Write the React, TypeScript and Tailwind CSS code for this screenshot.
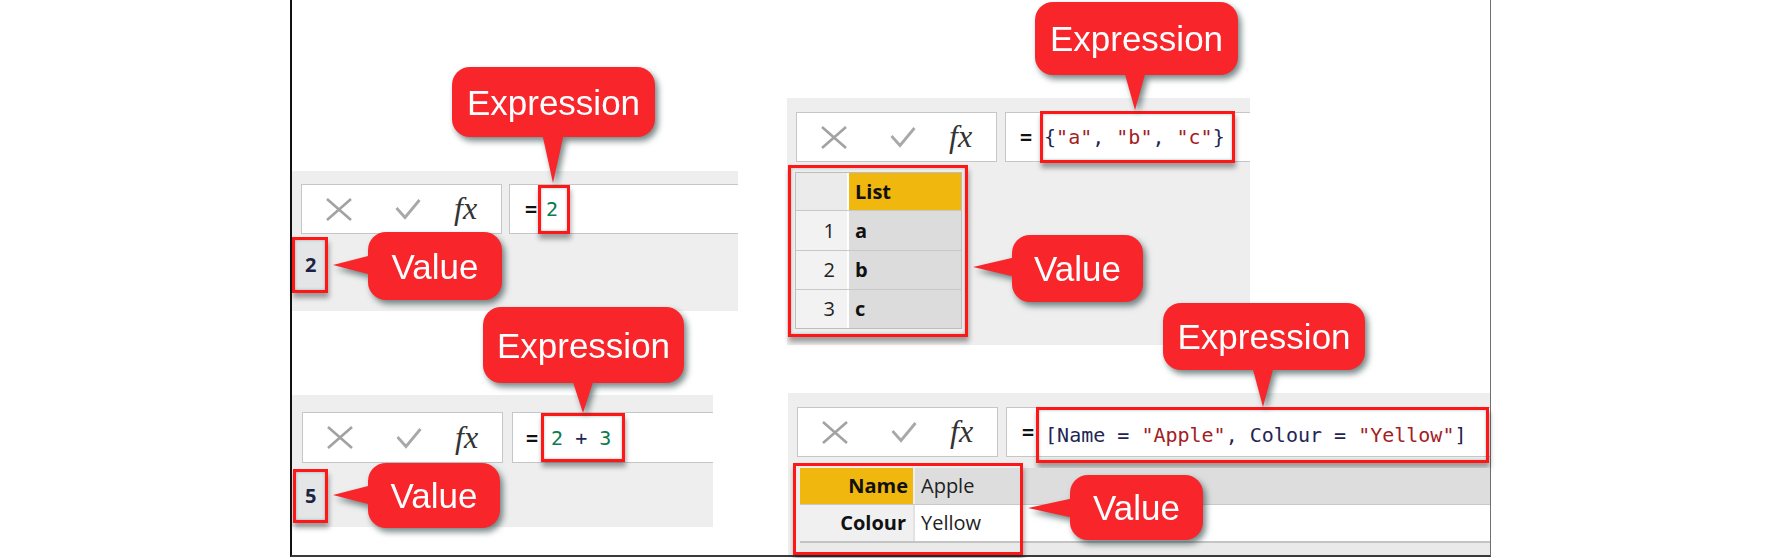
import React from "react";

const RED = "border-[#ff1717]";
const CODE = "font-['DejaVu_Sans_Mono',monospace] text-[20px] leading-none whitespace-pre";
const UI = "font-['Open_Sans',sans-serif] text-[20px] leading-none";

const Num = ({ children }: { children: React.ReactNode }) => (
  <span className="text-[#0b7a4f]">{children}</span>
);
const Str = ({ children }: { children: React.ReactNode }) => (
  <span className="text-[#a3201f]">{children}</span>
);
const Id = ({ children }: { children: React.ReactNode }) => (
  <span className="text-[#1f2654]">{children}</span>
);

// the cancel / commit / fx block of the formula bar
const FormulaButtons = ({ className = "" }: { className?: string }) => (
  <div
    className={`flex items-center shrink-0 w-[201px] bg-white border border-[#c6c6c6] pl-[23px] ${className}`}
  >
    <svg viewBox="0 0 28 25" className="w-[28px] h-[25px]">
      <path
        d="M2 2 L26 23 M26 2 L2 23"
        stroke="#a2a2a2"
        strokeWidth="2.6"
        fill="none"
      />
    </svg>
    <svg viewBox="0 0 26 24" className="ml-[42px] w-[26px] h-[24px]">
      <path
        d="M1.5 11 L10 20.5 L24.5 3"
        stroke="#a8a8a8"
        strokeWidth="2.8"
        fill="none"
      />
    </svg>
    <span className="ml-[33px] font-['Liberation_Serif',serif] italic text-[32px] leading-none text-[#333] -mt-[2px]">
      fx
    </span>
  </div>
);

interface CalloutProps {
  label: string;
  box: string;
  tail: string;
  points: string;
  viewBox: string;
}

const Callout = ({ label, box, tail, points, viewBox }: CalloutProps) => (
  <div
    className={`absolute drop-shadow-[3px_4px_3px_rgba(30,55,55,0.6)] ${box}`}
  >
    <svg viewBox={viewBox} className={`absolute ${tail}`}>
      <polygon points={points} fill="#f8252b" />
    </svg>
    <div className="relative w-full h-full rounded-[18px] bg-[#f8252b] flex items-center justify-center font-['Liberation_Sans',Arial,sans-serif] text-[35px] leading-none text-white">
      {label}
    </div>
  </div>
);

const boxShadow =
  "shadow-[1px_5px_5px_rgba(0,0,0,0.35),inset_0_0_3px_rgba(0,70,70,0.35)]";

const ListTable = () => {
  const rows = ["a", "b", "c"];
  const heights = ["h-[40px]", "h-[39px]", "h-[38px]"];
  return (
    <div className="w-[167px] border border-[#bdbdbd] flex flex-col">
      <div className="flex h-[38px] border-b border-[#c8c8c8]">
        <div className="w-[53px] bg-[#ebebeb] border-r-2 border-white" />
        <div
          className={`flex-1 bg-[#f0b70f] flex items-center pl-[6px] font-bold text-[#111] ${UI}`}
        >
          List
        </div>
      </div>
      {rows.map((r, i) => (
        <div
          key={r}
          className={`flex ${heights[i]} ${i < 2 ? "border-b border-[#c8c8c8]" : ""}`}
        >
          <div
            className={`w-[53px] bg-[#f2f2f2] border-r-2 border-white flex items-center justify-end pr-[12px] text-[#222] ${UI}`}
          >
            {i + 1}
          </div>
          <div
            className={`flex-1 bg-[#dcdcdc] flex items-center pl-[6px] font-bold text-[#111] ${UI}`}
          >
            {r}
          </div>
        </div>
      ))}
    </div>
  );
};

export default function App() {
  return (
    <div className="w-full h-[558px] bg-white">
      <div className="relative ml-[290px] w-[1201px] h-[557px] border-l-2 border-l-[#111] border-r border-r-[#707070] border-b-2 border-b-[#3a3a3a] flex">
        {/* left column */}
        <div className="flex flex-col pt-[171px] w-[446px] shrink-0">
          <div className="w-[446px] h-[140px] bg-[#eeeeee] pt-[13px] flex flex-col">
            <div className="flex pl-[9px] gap-[7px]">
              <FormulaButtons className="h-[50px]" />
              <div className="flex-1 h-[50px] bg-white border border-r-0 border-[#c6c6c6] flex items-center pl-[15px]">
                <span className={`${CODE} font-bold text-[#111]`}>=</span>
                <span
                  className={`ml-[1px] h-[49px] border-[3px] ${RED} pl-[5px] pr-[9px] flex items-center ${boxShadow} ${CODE}`}
                >
                  <Num>2</Num>
                </span>
              </div>
            </div>
            <div
              className={`mt-[3px] w-[36px] h-[56px] border-[3px] ${RED} bg-[#e3e5e7] flex items-center pl-[10px] font-bold text-[#1d2340] ${UI} ${boxShadow}`}
            >
              2
            </div>
          </div>

          <div className="mt-[84px] w-[421px] h-[132px] bg-[#eeeeee] pt-[17px] flex flex-col">
            <div className="flex pl-[10px] gap-[9px]">
              <FormulaButtons className="h-[51px]" />
              <div className="flex-1 h-[51px] bg-white border border-r-0 border-[#c6c6c6] flex items-center pl-[13px]">
                <span className={`${CODE} font-bold text-[#111]`}>=</span>
                <span
                  className={`ml-[3px] h-[49px] border-[3px] ${RED} pl-[7px] pr-[11px] flex items-center ${boxShadow} ${CODE}`}
                >
                  <Num>2</Num>
                  <Id> + </Id>
                  <Num>3</Num>
                </span>
              </div>
            </div>
            <div
              className={`mt-[6px] ml-[1px] w-[35px] h-[54px] border-[3px] ${RED} bg-[#e3e5e7] flex items-center pl-[9px] font-bold text-[#1d2340] ${UI} ${boxShadow}`}
            >
              5
            </div>
          </div>
        </div>

        {/* right column */}
        <div className="flex flex-col pt-[98px] ml-[49px] flex-1">
          <div className="w-[463px] h-[247px] bg-[#eeeeee] pt-[14px] flex flex-col">
            <div className="flex pl-[9px] gap-[8px]">
              <FormulaButtons className="h-[50px]" />
              <div className="flex-1 h-[50px] bg-white border border-r-0 border-[#c6c6c6] flex items-center pl-[14px]">
                <span className={`${CODE} font-bold text-[#111]`}>=</span>
                <span
                  className={`ml-[8px] h-[52px] border-[3px] ${RED} pl-[1px] pr-[7px] flex items-center ${boxShadow} ${CODE}`}
                >
                  <Id>{"{"}</Id>
                  <Str>"a"</Str>
                  <Id>, </Id>
                  <Str>"b"</Str>
                  <Id>, </Id>
                  <Str>"c"</Str>
                  <Id>{"}"}</Id>
                </span>
              </div>
            </div>
            <div
              className={`mt-[3px] ml-[1px] w-[180px] h-[172px] border-[3px] ${RED} pt-[4px] pl-[4px] ${boxShadow}`}
            >
              <ListTable />
            </div>
          </div>

          <div className="relative mt-[48px] ml-[1px] h-[162px] bg-[#eeeeee] pt-[14px] flex flex-col">
            <div className="flex pl-[9px] gap-[8px]">
              <FormulaButtons className="h-[50px]" />
              <div className="flex-1 h-[50px] bg-white border border-r-0 border-[#c6c6c6] flex items-start pl-[15px]">
                <span className={`${CODE} font-bold text-[#111] self-center`}>=</span>
                <span
                  className={`ml-[2px] -mt-[1px] w-[453px] shrink-0 h-[56px] border-[3px] ${RED} pl-[6px] flex items-center ${boxShadow} ${CODE}`}
                >
                  <Id>[Name = </Id>
                  <Str>"Apple"</Str>
                  <Id>, Colour = </Id>
                  <Str>"Yellow"</Str>
                  <Id>]</Id>
                </span>
              </div>
            </div>
            <div className="mt-[11px] ml-[12px] flex flex-col flex-1">
              <div className="flex h-[37px] bg-[#dddddd] border-b border-[#c8c8c8]">
                <div
                  className={`w-[115px] bg-[#f0b70f] flex items-center justify-end pr-[5px] font-bold text-[#111] border-r-2 border-[#eeeeee] ${UI}`}
                >
                  Name
                </div>
                <div className={`flex items-center pl-[6px] text-[#222] ${UI}`}>
                  Apple
                </div>
              </div>
              <div className="flex h-[38px] bg-white border-b-2 border-[#c4c4c4]">
                <div
                  className={`w-[115px] bg-[#f0f0f0] flex items-center justify-end pr-[7px] font-bold text-[#111] border-r-2 border-[#e2e2e2] ${UI}`}
                >
                  Colour
                </div>
                <div className={`flex items-center pl-[6px] text-[#222] ${UI}`}>
                  Yellow
                </div>
              </div>
              <div className="flex-1 bg-[#eaeaea]" />
            </div>
            <div
              className={`absolute left-[5px] top-[70px] w-[230px] h-[92px] border-[3px] ${RED} shadow-[1px_5px_5px_rgba(0,0,0,0.35)]`}
            />
          </div>
        </div>

        {/* callouts */}
        <Callout
          label="Expression"
          box="left-[160px] top-[67px] w-[203px] h-[70px]"
          tail="left-[90px] top-[66px] w-[22px] h-[50px]"
          viewBox="0 0 22 50"
          points="0,0 22,0 11,50"
        />
        <Callout
          label="Value"
          box="left-[76px] top-[232px] w-[134px] h-[68px]"
          tail="-left-[35px] top-[23px] w-[39px] h-[20px]"
          viewBox="0 0 39 20"
          points="39,0 39,20 0,10"
        />
        <Callout
          label="Expression"
          box="left-[191px] top-[307px] w-[201px] h-[76px]"
          tail="left-[89px] top-[72px] w-[22px] h-[34px]"
          viewBox="0 0 22 34"
          points="0,0 22,0 11,34"
        />
        <Callout
          label="Value"
          box="left-[76px] top-[463px] w-[132px] h-[65px]"
          tail="-left-[35px] top-[22px] w-[39px] h-[20px]"
          viewBox="0 0 39 20"
          points="39,0 39,20 0,10"
        />
        <Callout
          label="Expression"
          box="left-[743px] top-[2px] w-[203px] h-[73px]"
          tail="left-[89px] top-[69px] w-[22px] h-[39px]"
          viewBox="0 0 22 39"
          points="0,0 22,0 11,39"
        />
        <Callout
          label="Value"
          box="left-[720px] top-[235px] w-[131px] h-[67px]"
          tail="-left-[39px] top-[22px] w-[43px] h-[20px]"
          viewBox="0 0 43 20"
          points="43,0 43,20 0,10"
        />
        <Callout
          label="Expression"
          box="left-[871px] top-[303px] w-[202px] h-[67px]"
          tail="left-[89px] top-[63px] w-[22px] h-[41px]"
          viewBox="0 0 22 41"
          points="0,0 22,0 11,41"
        />
        <Callout
          label="Value"
          box="left-[778px] top-[475px] w-[133px] h-[65px]"
          tail="-left-[42px] top-[23px] w-[46px] h-[20px]"
          viewBox="0 0 46 20"
          points="46,0 46,20 0,10"
        />
      </div>
    </div>
  );
}
